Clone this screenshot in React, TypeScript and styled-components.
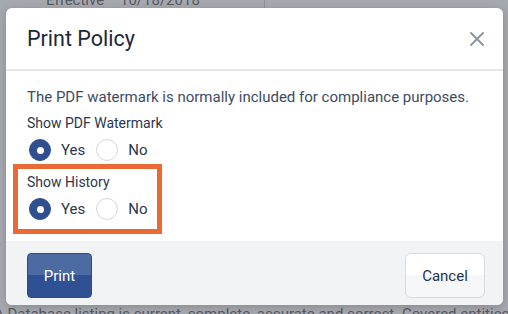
import styled, { createGlobalStyle } from 'styled-components'

const GlobalStyle = createGlobalStyle`
  html, body {
    margin: 0;
    padding: 0;
    background: #a6a8af;
    font-family: Roboto, 'Liberation Sans', sans-serif;
  }
`

const Page = styled.div`
  position: relative;
  width: 508px;
  height: 314px;
  overflow: hidden;
  background: #a6a8af;
  color: #565a62;
  font-size: 15px;
`

const TopRow = styled.div`
  display: flex;
  height: 8px;
  align-items: flex-end;
  padding-left: 46px;
`

const TopCell = styled.div<{ w: number }>`
  width: ${p => p.w}px;
  line-height: 16px;
  margin-top: -8px;
`

const TopDivider = styled.div`
  width: 1px;
  height: 8px;
  background: #8f9299;
  margin-left: 20px;
`

const Footnote = styled.div`
  position: absolute;
  left: -6px;
  bottom: -9px;
  white-space: nowrap;
  font-size: 15px;
`

const Modal = styled.div`
  position: absolute;
  left: 6px;
  top: 8px;
  width: 497px;
  height: 297px;
  background: #fff;
  border-radius: 6px;
  overflow: hidden;
  display: flex;
  flex-direction: column;
  box-shadow: 0 2px 8px rgba(0, 0, 0, 0.18);
`

const Header = styled.div`
  height: 63px;
  box-sizing: border-box;
  display: flex;
  align-items: center;
  justify-content: space-between;
  padding: 0 18px 0 21px;
  border-bottom: 2px solid #e4e6ea;
`

const Title = styled.h2`
  margin: 0;
  font-size: 21.5px;
  font-weight: 400;
  color: #1d2838;
`

const Close = styled.button`
  border: 0;
  background: none;
  padding: 0;
  width: 16px;
  height: 16px;
  display: flex;
  align-items: center;
  justify-content: center;
  cursor: pointer;
`

const Body = styled.div`
  flex: 1;
  padding: 16px 21px 0;
  display: flex;
  flex-direction: column;
  align-items: flex-start;
`

const Intro = styled.p`
  margin: 0 0 6px;
  font-size: 15px;
  line-height: 20px;
  color: #3d4b63;
`

const Label = styled.div`
  font-size: 14px;
  line-height: 20px;
  color: #2b374b;
`

const RadioRow = styled.div`
  display: flex;
  align-items: center;
  margin-top: 6px;
  height: 22px;
`

const Option = styled.label`
  display: flex;
  align-items: center;
  gap: 10px;
  margin-right: 9px;
  font-size: 15px;
  color: #2b374b;
  cursor: pointer;
`

const Dot = styled.span<{ checked: boolean }>`
  width: 22px;
  height: 22px;
  box-sizing: border-box;
  border-radius: 50%;
  margin-left: 2px;
  display: flex;
  align-items: center;
  justify-content: center;
  background: ${p => (p.checked ? '#2f4f8f' : '#fff')};
  border: 1px solid ${p => (p.checked ? '#2f4f8f' : '#d3d7de')};
  &::after {
    content: '';
    width: 7px;
    height: 7px;
    border-radius: 50%;
    background: #fff;
    display: ${p => (p.checked ? 'block' : 'none')};
  }
`

const Highlight = styled.div`
  margin: 3px 0 0 -14px;
  width: 149px;
  box-sizing: border-box;
  border: 5px solid #ea6a35;
  padding: 3px 0 9px 9px;
  display: flex;
  flex-direction: column;
`

const Footer = styled.div`
  height: 64px;
  background: #f2f3f5;
  display: flex;
  align-items: flex-start;
  justify-content: space-between;
  padding: 12px 18px 0 21px;
  box-sizing: border-box;
`

const Button = styled.button<{ primary?: boolean }>`
  height: 45px;
  min-width: ${p => (p.primary ? 65 : 80)}px;
  border-radius: ${p => (p.primary ? 4 : 6)}px;
  font-family: Roboto, 'Liberation Sans', sans-serif;
  font-size: 15px;
  cursor: pointer;
  color: ${p => (p.primary ? '#fff' : '#23334f')};
  border: 1px solid ${p => (p.primary ? '#2c4b88' : '#d6dae1')};
  background: ${p =>
    p.primary
      ? 'linear-gradient(#4c6ba2 0%, #4c6ba2 50%, #2f5193 50%, #2f5193 100%)'
      : 'linear-gradient(#fff 0%, #fff 50%, #f6f7f9 50%, #f6f7f9 100%)'};
`

type RadioGroupProps = { name: string; value: 'yes' | 'no' }

const RadioGroup = ({ value }: RadioGroupProps) => (
  <RadioRow>
    <Option>
      <Dot checked={value === 'yes'} />
      Yes
    </Option>
    <Option>
      <Dot checked={value === 'no'} />
      No
    </Option>
  </RadioRow>
)

export default function App() {
  return (
    <Page>
      <GlobalStyle />
      <TopRow>
        <TopCell w={74}>Effective</TopCell>
        <TopCell w={124}>10/18/2018</TopCell>
        <TopDivider />
      </TopRow>
      <Footnote>
        A Database listing is current, complete, accurate and correct. Covered entities
      </Footnote>

      <Modal role="dialog" aria-label="Print Policy">
        <Header>
          <Title>Print Policy</Title>
          <Close aria-label="Close">
            <svg width="14" height="14" viewBox="0 0 14 14">
              <path d="M1 1L13 13M13 1L1 13" stroke="#8c919a" strokeWidth="1.8" strokeLinecap="round" />
            </svg>
          </Close>
        </Header>
        <Body>
          <Intro>The PDF watermark is normally included for compliance purposes.</Intro>
          <Label>Show PDF Watermark</Label>
          <RadioGroup name="watermark" value="yes" />
          <Highlight>
            <Label>Show History</Label>
            <RadioGroup name="history" value="yes" />
          </Highlight>
        </Body>
        <Footer>
          <Button primary>Print</Button>
          <Button>Cancel</Button>
        </Footer>
      </Modal>
    </Page>
  )
}
